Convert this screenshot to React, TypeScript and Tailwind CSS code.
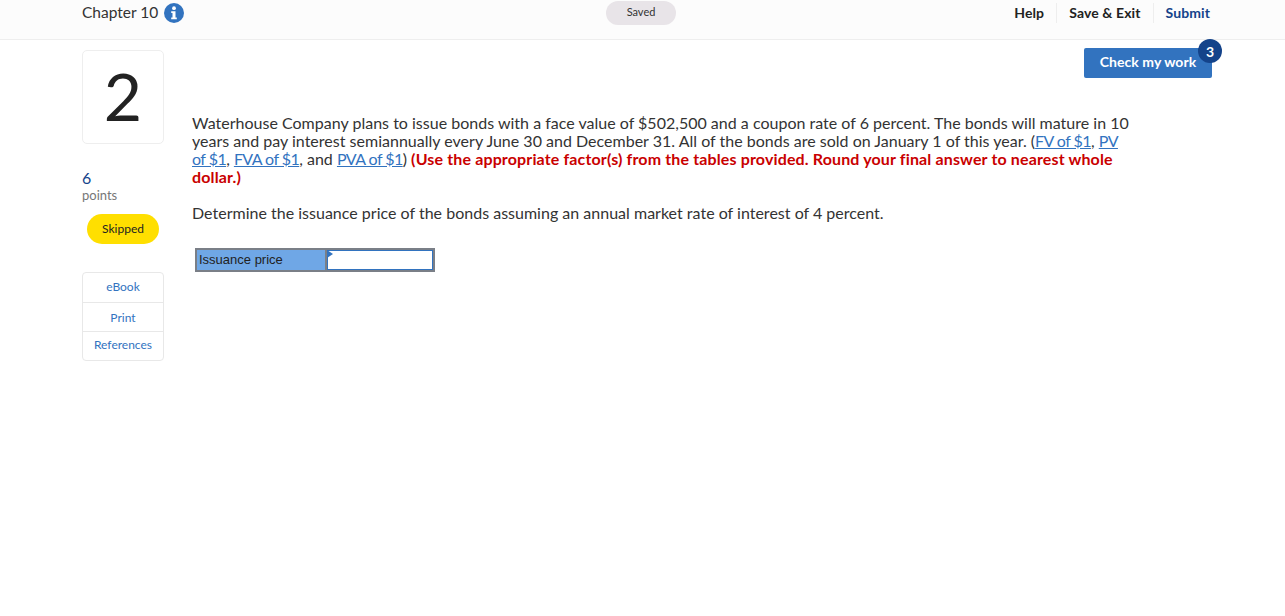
const font = "font-['Lato','Open_Sans',sans-serif]";

function InfoIcon() {
  return (
    <svg width="20" height="20" viewBox="0 0 20 20" className="shrink-0">
      <circle cx="10" cy="10" r="10" fill="#3273bf" />
      <circle cx="10" cy="5.2" r="1.9" fill="#ffffff" />
      <path d="M7.2 8.3h4.3v6.1h1.3v1.8H7.2v-1.8h1.3v-4.3H7.2z" fill="#ffffff" />
    </svg>
  );
}

function Header() {
  return (
    <header className="h-10 border-b border-[#eeeeee] bg-[#fcfcfc] pl-[82px] pr-[75px] grid grid-cols-[524px_70px_1fr] items-start">
      <div className="flex items-center gap-[6px] h-[26px] text-[15.5px] text-[#333333]">
        <span>Chapter 10</span>
        <InfoIcon />
      </div>
      <div className="w-[70px] h-6 mt-[1px] pb-[2px] rounded-full bg-[#e8e4e8] flex items-center justify-center text-[11px] text-[#333333]">
        Saved
      </div>
      <nav className="flex justify-end items-start mt-[3px] text-[14px] tracking-[0.1px] font-bold text-[#222222]">
        <span className="h-[20px] leading-[20px] pr-3 border-r border-[#eeeeee]">Help</span>
        <span className="h-[20px] leading-[20px] px-3 border-r border-[#eeeeee]">Save &amp; Exit</span>
        <span className="h-[20px] leading-[20px] pl-3 text-[#14438a]">Submit</span>
      </nav>
    </header>
  );
}

function Sidebar() {
  return (
    <aside className="w-[82px] shrink-0 pt-[10px] flex flex-col">
      <div className="h-[94px] rounded-[5px] border border-[#eeeeee] flex items-center justify-center text-[66px] leading-none text-[#222222]">
        <span className="-mt-[3px]">2</span>
      </div>
      <div className="mt-[25px] text-[16px] leading-[18px] text-[#14438a]">6</div>
      <div className="text-[13px] leading-[17px] text-[#777777]">points</div>
      <div className="mt-[10px] ml-[5px] w-[72px] h-[30px] rounded-full bg-[#ffdf00] flex items-center justify-center text-[12px] text-[#222222]">
        Skipped
      </div>
      <div className="mt-[28px] rounded-[4px] border border-[#e8e8e8] flex flex-col text-[12px] text-[#3273bf] text-center">
        <a className="h-[30px] leading-[27px] border-b border-[#e8e8e8]">eBook</a>
        <a className="h-[29px] leading-[30px] border-b border-[#e8e8e8]">Print</a>
        <a className="h-[28px] leading-[26px]">References</a>
      </div>
    </aside>
  );
}

function Question() {
  const link = 'text-[#3273bf] underline tracking-[-0.55px]';
  return (
    <main className="flex-1 pl-7 relative">
      <div className="flex justify-end pt-2">
        <button className="relative w-[128px] h-[30px] pb-[3px] rounded-[2px] bg-[#3273bf] text-white text-[14px] tracking-[0.05px] font-bold">
          Check my work
          <span className="absolute -top-[9px] -right-[10px] w-6 h-6 rounded-full bg-[#14438a] text-white text-[14px] font-bold flex items-center justify-center">3</span>
        </button>
      </div>
      <div className="mt-[36px] w-[950px] text-[16px] leading-[18px] tracking-[0.01px] text-[#333333]">
        <p>
          Waterhouse Company plans to issue bonds with a face value of $502,500 and a coupon rate of 6 percent. The bonds will mature in 10<br />
          years and pay interest semiannually every June 30 and December 31. All of the bonds are sold on January 1 of this year. (<a className={link}>FV of $1</a>, <a className={link}>PV</a><br />
          <a className={link}>of $1</a>, <a className={link}>FVA of $1</a>, and <a className={link}>PVA of $1</a>) <strong className="text-[#c90000] tracking-[0.14px]">(Use the appropriate factor(s) from the tables provided. Round your final answer to nearest whole<br />dollar.)</strong>
        </p>
        <p className="mt-[18px]">Determine the issuance price of the bonds assuming an annual market rate of interest of 4 percent.</p>
      </div>
      <div className="mt-[26px] ml-[3px] w-[240px] h-6 border-2 border-[#7a7f87] flex">
        <div className="w-[130px] bg-[#6fa7e6] border-r-2 border-[#7a7f87] pl-[2px] text-[13px] leading-[20px] text-[#222222] font-['Liberation_Sans',sans-serif]">
          Issuance price
        </div>
        <div className="flex-1 relative bg-white border border-[#3273bf]">
          <span className="absolute -top-[1px] -left-[1px] w-0 h-0 border-y-[4px] border-y-transparent border-l-[6px] border-l-[#3273bf]" />
        </div>
      </div>
    </main>
  );
}

export default function App() {
  return (
    <div className={`${font} w-[1285px] h-[616px] bg-white overflow-hidden`}>
      <Header />
      <div className="flex pl-[82px] pr-[73px]">
        <Sidebar />
        <Question />
      </div>
    </div>
  );
}
